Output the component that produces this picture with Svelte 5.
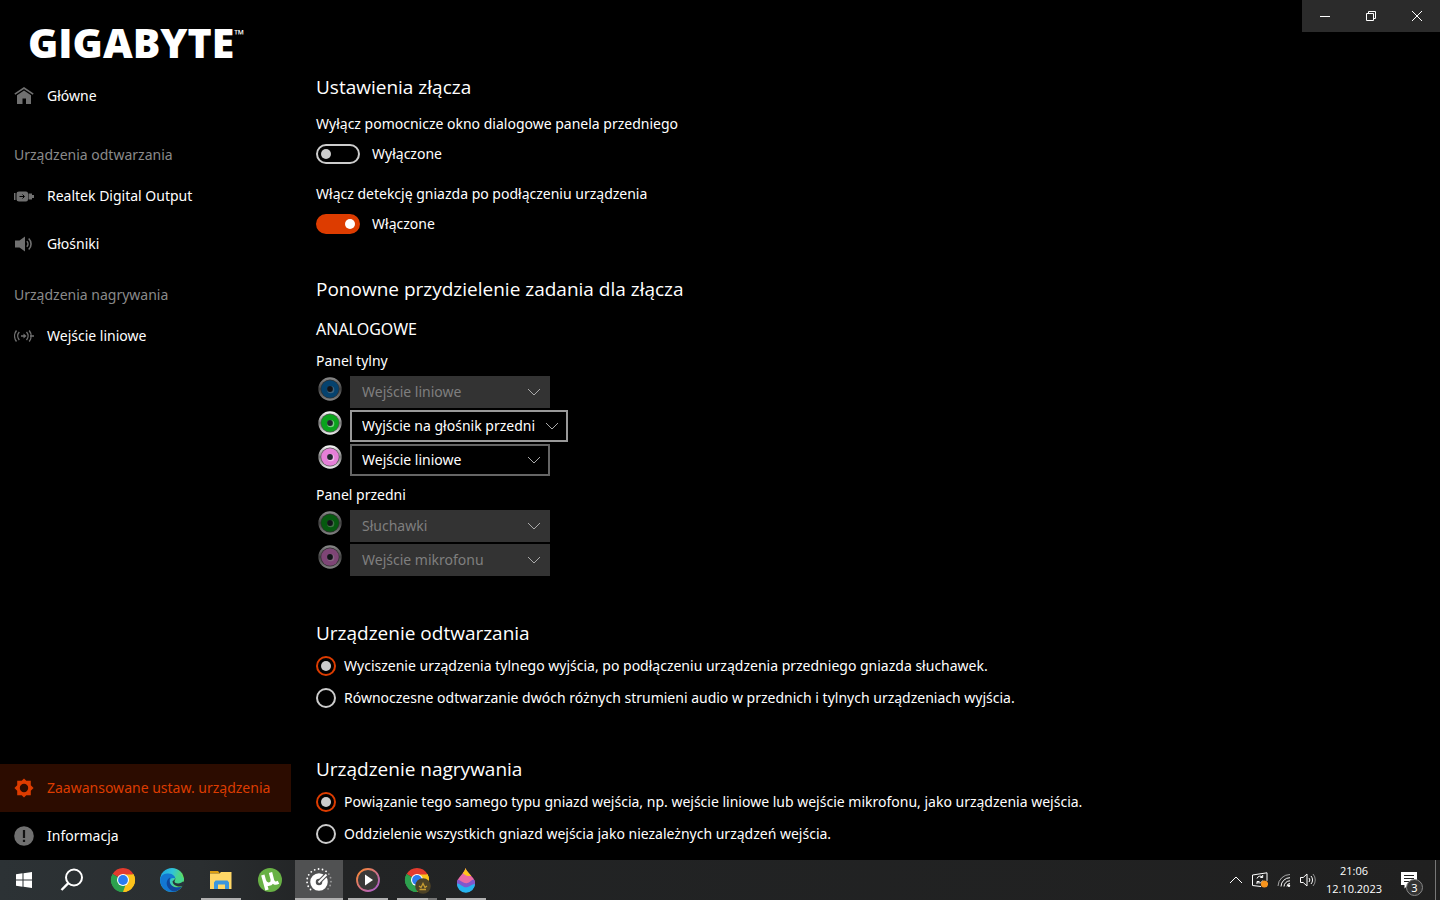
<script lang="ts">
  let dialogOff = $state(false);
  let detection = $state(true);
  let playback = $state("mute");
  let recording = $state("join");

  const playbackDevices = [
    { name: "Realtek Digital Output", icon: "plug" },
    { name: "Głośniki", icon: "speaker" },
  ];
  const recordingDevices = [{ name: "Wejście liniowe", icon: "linein" }];

  const rearPanel = [
    { id: "rear-blue", color: "#0a78c8", value: "Wejście liniowe", disabled: true },
    { id: "rear-green", color: "#0aa31c", value: "Wyjście na głośnik przedni", focused: true },
    { id: "rear-pink", color: "#e67fd8", value: "Wejście liniowe" },
  ];
  const frontPanel = [
    { id: "front-green", color: "#0aa31c", value: "Słuchawki", disabled: true },
    { id: "front-pink", color: "#e67fd8", value: "Wejście mikrofonu", disabled: true },
  ];

  const playbackOptions = [
    { value: "mute", label: "Wyciszenie urządzenia tylnego wyjścia, po podłączeniu urządzenia przedniego gniazda słuchawek." },
    { value: "multi", label: "Równoczesne odtwarzanie dwóch różnych strumieni audio w przednich i tylnych urządzeniach wyjścia." },
  ];
  const recordingOptions = [
    { value: "join", label: "Powiązanie tego samego typu gniazd wejścia, np. wejście liniowe lub wejście mikrofonu, jako urządzenia wejścia." },
    { value: "split", label: "Oddzielenie wszystkich gniazd wejścia jako niezależnych urządzeń wejścia." },
  ];

  const apps = [
    { name: "chrome" },
    { name: "edge" },
    { name: "explorer", open: true },
    { name: "utorrent" },
    { name: "audio", open: true, active: true },
    { name: "player", open: true },
    { name: "profile", open: true, stacked: true },
    { name: "paint", open: true },
  ];

  // dots around the volume dial, dimmer on the right
  const dialDots = Array.from({ length: 15 }, (_, i) => {
    const a = ((135 + i * 19) * Math.PI) / 180;
    return { x: 12 + 12 * Math.cos(a), y: 13 + 12 * Math.sin(a), o: i < 10 ? 1 : 0.45 };
  });
</script>

{#snippet navIcon(name: string)}
  <svg class="nav-icon" viewBox="0 0 20 20" aria-hidden="true">
    {#if name == "home"}
      <path d="M.8 8.200 10 2l9.200 6.200" fill="none" stroke="currentColor" stroke-width="1.600" />
      <path d="M3 9.200 10 4.600l7 4.600V18h-5v-5.500H8.500V18H3z" fill="currentColor" />
    {:else if name == "plug"}
      <path d="M0 7h1.500v7H0zM5 5.500h7q2 0 2 2v6q0 2-2 2H5q-2.500 0-2.500-2v-6q0-2 2.500-2zM14.500 7.500H18v1.500h2v3h-2v1.500h-3.500z" fill="currentColor" />
      <path d="M5.500 10.500h4.500M8.500 8.500l2 2-2 2" fill="none" stroke="#000" stroke-width="1" />
    {:else if name == "speaker"}
      <path d="M1 6.500h4.500L11 2.500v15l-5.500-4H1z" fill="currentColor" />
      <path d="M12.800 7.200a4 4 0 0 1 0 5.600M14.700 4.500a7.600 7.600 0 0 1 0 11" fill="none" stroke="currentColor" stroke-width="1.600" />
    {:else if name == "linein"}
      <path d="M2.500 4.500a9 9 0 0 0 0 11M5.300 6a6 6 0 0 0 0 8M12.500 6a6 6 0 0 1 0 8M15.200 4.500a9 9 0 0 1 0 11M16 10h4" fill="none" stroke="currentColor" stroke-width="1.400" />
      <path d="M7 9.300h2.500V7.500L12.500 10l-3 2.500v-1.800H7z" fill="currentColor" />
    {:else if name == "gear"}
      <path fill-rule="evenodd" d="M10 .4l2.300 2.300h4.500v4.500L19.600 10l-2.800 2.800v4.500h-4.500L10 19.600l-2.300-2.300H3.200v-4.500L.4 10l2.800-2.800V2.700h4.500zM10 5.800a4.200 4.200 0 1 0 0 8.400 4.200 4.200 0 0 0 0-8.400z" fill="currentColor" />
    {:else}
      <circle cx="10" cy="10" r="9.800" fill="currentColor" />
      <path d="M10 4v8M10 13.700v2.300" stroke="#111" stroke-width="2.200" />
    {/if}
  </svg>
{/snippet}

{#snippet navItem(name: string, icon: string, active = false)}
  <a class="nav-item" class:active href="#{icon}">
    {@render navIcon(icon)}
    <span>{name}</span>
  </a>
{/snippet}

{#snippet jacks(title: string, rows: any[])}
  <h4>{title}</h4>
  {#each rows as jack (jack.id)}
    <div class="jack-row">
      <svg class="jack" class:dim={jack.disabled} viewBox="0 0 24 24" aria-hidden="true">
        <circle cx="12" cy="12" r="11.700" fill="url(#rim)" />
        <circle cx="12" cy="12" r="9.400" fill="#555" />
        <circle cx="12" cy="12" r="8.800" fill={jack.color} />
        <circle cx="12.700" cy="12.700" r="3.600" fill="#fff" opacity=".45" />
        <circle cx="12" cy="12" r="2.900" fill="#20242c" />
      </svg>
      <div class="select">
        <select id={jack.id} class:focused={jack.focused} disabled={jack.disabled} aria-label={title}>
          <option>{jack.value}</option>
        </select>
        <svg class="arrow" viewBox="0 0 12 8" aria-hidden="true">
          <path d="M0 1l6 6 6-6" />
        </svg>
      </div>
    </div>
  {/each}
{/snippet}

{#snippet chromeLogo()}
  <path d="M12 12 1.600 6A12 12 0 0 1 22.400 6z" fill="#e33b2e" />
  <path d="M12 12 22.400 6A12 12 0 0 1 12 24z" fill="#fcc21b" />
  <path d="M12 12v12A12 12 0 0 1 1.600 6z" fill="#2da04e" />
  <path d="M12 6.500h10.700A12 12 0 0 1 12 24l4.800-9.300z" fill="#fcc21b" />
  <path d="M1.600 6 7.200 14.700 12 17.500l2.500-.5L12 24A12 12 0 0 1 1.600 6z" fill="#2da04e" />
  <circle cx="12" cy="12" r="6" fill="#fff" />
  <circle cx="12" cy="12" r="4.900" fill="#2b7cf0" />
{/snippet}

{#snippet appIcon(name: string)}
  <svg class="app-icon" viewBox="0 0 24 24" aria-hidden="true">
    {#if name == "chrome"}
      {@render chromeLogo()}
    {:else if name == "edge"}
      <circle cx="12" cy="12" r="12" fill="url(#edge-top)" />
      <path d="M.2 10.500C1.500 6.800 5.200 5.500 8.500 5.600c4.400.1 7 3 6.900 5.700-.6-1.600-4.700-2.200-5.600 1.400-.8 4 2.500 6.700 6.700 6.700 2.200 0 4.200-.6 5.500-1.200C19.800 22 16 24 12 24 4.800 24-.5 18 .2 10.500z" fill="#1377d2" />
      <path d="M10.200 9.500c-3.700 1.800-4.600 6.500-2 10.300 1.700 2.500 4.600 3.900 7 3.700 3-.8 5.500-2.800 6.900-5.300-4.300 2.200-9.300 1.600-11.600-2.200-1.300-2.200-1-5-.3-6.500z" fill="#10479b" />
      <path d="M12.500 13.500c.5-1 2.500-1.500 2.800-3.500l9 4v3.500c-1.500.8-4.800 1.200-7 .7-2.800-.5-4.500-2.300-4.800-4.700z" fill="#28343a" />
      <path d="M15.300 10c.3 2-1 2.500-.8 3.800.3 1.700 4.300 2.200 6.500 1 2-1 3-2.500 3-4l-4-4z" fill="#46d68c" />
    {:else if name == "explorer"}
      <path d="M1 3h8l2 2.500H1z" fill="#dda012" />
      <path d="M1 5.500h9.500L12 4h10.500v17H1z" fill="#ffd766" />
      <path d="M5 14.500l1.500-2h12l1.500 2V21h-4v-4.500H9V21H5z" fill="#3b96dd" />
    {:else if name == "utorrent"}
      <circle cx="12" cy="12" r="12" fill="#68b145" />
      <path d="M4.800 7 9 22M6.300 12.500c1.700 5.500 8.700 4.500 8-1L12.500 4.500M14 10.500c.8 4.500 3 5.500 6.500 3.800" fill="none" stroke="#fff" stroke-width="3.400" />
    {:else if name == "audio"}
      {#each dialDots as dot}
        <circle cx={dot.x} cy={dot.y} r=".9" fill="#fff" opacity={dot.o} />
      {/each}
      <circle cx="12" cy="14" r="6" fill="none" stroke="#fff" stroke-width="5.500" />
      <path d="m12 14 8-8" stroke="#505152" stroke-width="4" />
      <path d="m11.500 14.500 8-8" stroke="#fff" stroke-width="2" />
    {:else if name == "player"}
      <circle cx="12" cy="12" r="11" fill="#3a3938" stroke="url(#player-ring)" stroke-width="1.800" />
      <path d="M9 6.500v11l8-5.500z" fill="#fff" />
    {:else if name == "profile"}
      {@render chromeLogo()}
      <circle cx="18" cy="18" r="7.800" fill="#4d4226" />
      <path d="m14 18 2 1.500 2-4 2 4 2-1.500M14.500 21.500h6.500" fill="none" stroke="#c79c31" stroke-width="1.300" />
    {:else if name == "paint"}
      <path d="M11.500 0c1 5 9.500 9 9.500 15a9 9 0 0 1-18 0C3 9.500 10 6 11.500 0z" fill="#e96aa5" />
      <path d="M11.500 0c1 3 3.500 5.300 5.800 7.800C14.500 8.500 12 8 8.800 5.200 10.200 3.600 11 2 11.500 0z" fill="#ffc51b" />
      <path d="M3.800 11.500c3.500 1 6 4.500 9.500 3.500 3-.8 4-3.500 6.700-3.600.7 1.200 1 2.400 1 3.600a9 9 0 0 1-18 0c0-1.200.3-2.400.8-3.500z" fill="#8057cd" />
      <path d="M3 15.500c3.500 0 6 4.500 10 3.700 3-.6 4.500-3 8-3.200A9 9 0 0 1 3 15.500z" fill="#26b4ee" />
    {/if}
  </svg>
{/snippet}

{#snippet radios(group: string, options: any[], current: string, pick: (v: string) => void)}
  {#each options as option (option.value)}
    <label class="radio">
      <input type="radio" name={group} value={option.value} checked={current == option.value} onchange={() => pick(option.value)} />
      <span>{option.label}</span>
    </label>
  {/each}
{/snippet}

<svg class="defs" aria-hidden="true">
  <defs>
    <linearGradient id="rim" x1="0" y1="0" x2="0" y2="1">
      <stop offset="0" stop-color="#fff" />
      <stop offset=".5" stop-color="#777" />
      <stop offset="1" stop-color="#f0f0f0" />
    </linearGradient>
    <linearGradient id="edge-top" x1="0" y1="0" x2="1" y2=".4">
      <stop offset="0" stop-color="#1ba2e4" />
      <stop offset=".5" stop-color="#30c3d8" />
      <stop offset="1" stop-color="#68e04c" />
    </linearGradient>
    <linearGradient id="player-ring" x1="0" y1="0" x2="1" y2="1">
      <stop offset="0" stop-color="#ff8a2b" />
      <stop offset="1" stop-color="#a55bd6" />
    </linearGradient>
  </defs>
</svg>

<div class="desktop">
  <div class="window">
    <aside>
      <div class="logo">GIGABYTE<sup>™</sup></div>
      <nav>
        {@render navItem("Główne", "home")}
        <div class="group first">Urządzenia odtwarzania</div>
        {#each playbackDevices as device}
          {@render navItem(device.name, device.icon)}
        {/each}
        <div class="group">Urządzenia nagrywania</div>
        {#each recordingDevices as device}
          {@render navItem(device.name, device.icon)}
        {/each}
      </nav>
      <nav class="bottom">
        {@render navItem("Zaawansowane ustaw. urządzenia", "gear", true)}
        {@render navItem("Informacja", "info")}
      </nav>
    </aside>

    <div class="page">
      <header>
        <div class="controls">
          <button aria-label="Minimalizuj">
            <svg viewBox="0 0 10 10"><path d="M0 5.500h10" /></svg>
          </button>
          <button aria-label="Przywróć">
            <svg viewBox="0 0 10 10"><path d="M.5 2.500h7v7h-7zM2.500 2.500v-2h7v7h-2" /></svg>
          </button>
          <button aria-label="Zamknij">
            <svg viewBox="0 0 10 10"><path d="M0 0l10 10M10 0 0 10" /></svg>
          </button>
        </div>
      </header>

      <main>
        <section>
          <h2>Ustawienia złącza</h2>
          <div class="setting">
            <label for="dialog">Wyłącz pomocnicze okno dialogowe panela przedniego</label>
            <div class="toggle">
              <input id="dialog" type="checkbox" role="switch" bind:checked={dialogOff} />
              <span>{dialogOff ? "Włączone" : "Wyłączone"}</span>
            </div>
          </div>
          <div class="setting">
            <label for="detection">Włącz detekcję gniazda po podłączeniu urządzenia</label>
            <div class="toggle">
              <input id="detection" type="checkbox" role="switch" bind:checked={detection} />
              <span>{detection ? "Włączone" : "Wyłączone"}</span>
            </div>
          </div>
        </section>

        <section>
          <h2>Ponowne przydzielenie zadania dla złącza</h2>
          <h3>ANALOGOWE</h3>
          {@render jacks("Panel tylny", rearPanel)}
          {@render jacks("Panel przedni", frontPanel)}
        </section>

        <section>
          <h2>Urządzenie odtwarzania</h2>
          {@render radios("playback", playbackOptions, playback, (v) => (playback = v))}
        </section>

        <section>
          <h2>Urządzenie nagrywania</h2>
          {@render radios("recording", recordingOptions, recording, (v) => (recording = v))}
        </section>
      </main>
    </div>
  </div>

  <footer>
    <button class="task" aria-label="Start">
      <svg class="app-icon" viewBox="0 0 24 24">
        <path d="M4 6.300 10.500 5.300v6.200H4zM11.500 5.200 20 4v7.500h-8.500zM4 12.500h6.500v6.200L4 17.700zM11.500 12.500H20V20l-8.500-1.200z" fill="#fff" />
      </svg>
    </button>
    <button class="task" aria-label="Szukaj">
      <svg class="app-icon" viewBox="0 0 24 24">
        <circle cx="14" cy="9.500" r="8" fill="none" stroke="#fff" stroke-width="2" />
        <path d="M8.300 15.200 1.500 22" stroke="#fff" stroke-width="2.400" />
      </svg>
    </button>
    <div class="apps">
      {#each apps as app (app.name)}
        <button class="task" class:open={app.open} class:active={app.active} class:stacked={app.stacked} aria-label={app.name}>
          {@render appIcon(app.name)}
        </button>
      {/each}
    </div>

    <div class="tray">
      <svg class="tray-icon" viewBox="0 0 16 16"><path d="m2 11 6-6 6 6" /></svg>
      <svg class="tray-icon" viewBox="0 0 16 16">
        <path d="M.5 3 15 .8v8M9 14.500l-8.500-1V3M5 6.500a3.400 3.400 0 0 1 5.500-1.500M10.700 3v2.500H8.300M10.700 8.500a3.400 3.400 0 0 1-5.400 1.700M5 12V9.500h2.500" />
        <circle cx="12.500" cy="12" r="3.600" class="badge" />
      </svg>
      <svg class="tray-icon" viewBox="0 0 16 16">
        <path d="M2 14A12 12 0 0 1 14 2.500" opacity=".6" />
        <path d="M5 14.500A9 9 0 0 1 14 5.700M8 14.500A6 6 0 0 1 14 8.800M11 14.500a3 3 0 0 1 3-3" />
        <circle cx="13" cy="13.800" r="1.200" fill="#fff" stroke="none" />
      </svg>
      <svg class="tray-icon" viewBox="0 0 16 16">
        <path d="M.5 5.500h2.700L7 2v12l-3.800-3.500H.5zM9 6a3 3 0 0 1 0 4M11 4a6 6 0 0 1 0 8" />
        <path d="M13 2a9 9 0 0 1 0 12" opacity=".5" />
      </svg>
      <div class="clock">
        <time>21:06</time>
        <time>12.10.2023</time>
      </div>
      <button class="notes" aria-label="Powiadomienia">
        <svg viewBox="0 0 18 18">
          <path d="M1 1h16v13H8l-3.500 3.500V14H1z" fill="#fff" />
          <path d="M4 4.500h10M4 7.500h10M4 10.500h7" stroke="#222" />
        </svg>
        <span>3</span>
      </button>
    </div>
  </footer>
</div>

<style>
  :global(body) {
    margin: 0;
    background: #000;
  }

  .defs {
    position: absolute;
    width: 0;
    height: 0;
  }

  .desktop {
    min-height: 100vh;
    display: flex;
    flex-direction: column;
    background: #000;
    color: #fff;
    font-family: "Noto Sans", "Open Sans", sans-serif;
    font-size: 14px;
    line-height: 20px;
  }

  button, select {
    font: inherit;
    color: inherit;
    border: 0;
    background: none;
  }

  h2, h3, h4 {
    margin: 0;
    font-weight: 400;
  }

  .window {
    flex: 1;
    display: flex;
  }

  aside {
    width: 291px;
    flex: none;
    display: flex;
    flex-direction: column;
  }

  .logo {
    height: 72px;
    padding-left: 28px;
    box-sizing: border-box;
    font-family: "Open Sans", sans-serif;
    font-size: 41px;
    font-weight: 800;
    line-height: 84px;
    white-space: nowrap;

    sup {
      font-size: 13px;
      font-weight: 600;
      line-height: 12px;
      vertical-align: 19px;
    }
  }

  .nav-item {
    display: flex;
    align-items: center;
    gap: 13px;
    height: 48px;
    padding-left: 14px;
    color: #fff;
    text-decoration: none;

    &.active {
      color: #dd3c00;
      background: #2c0c00;
    }

    &:not(.active) .nav-icon {
      color: #707070;
    }
  }

  .nav-icon {
    width: 20px;
    height: 20px;
  }

  .group {
    padding: 17px 14px 7px;
    color: #8a8a8a;

    &.first {
      margin-top: 8px;
    }
  }

  .bottom {
    margin-top: auto;
  }

  .page {
    flex: 1;
  }

  header {
    display: flex;
    justify-content: flex-end;
  }

  .controls {
    display: flex;
    background: #2b2b2b;

    button {
      width: 46px;
      height: 32px;
      display: grid;
      place-items: center;
      padding: 0;
    }

    svg {
      width: 10px;
      height: 10px;
      fill: none;
      stroke: #fff;
    }
  }

  main {
    padding: 0 25px 10px;
  }

  section {
    padding-top: 41px;
  }

  h2 {
    font-family: "Open Sans", sans-serif;
    font-size: 19px;
    line-height: 28px;
    margin-bottom: 3px;
  }

  h3 {
    font-size: 16px;
    padding-top: 13px;
    margin-bottom: 12px;
  }

  .setting {
    padding-top: 10px;

    & + .setting {
      padding-top: 20px;
    }

    label {
      display: block;
      margin-bottom: 10px;
    }
  }

  .toggle {
    display: flex;
    align-items: center;
    gap: 12px;

    input {
      appearance: none;
      margin: 0;
      width: 44px;
      height: 20px;
      padding: 3px;
      box-sizing: border-box;
      border: 2px solid #ccc;
      border-radius: 10px;
      display: flex;

      &::before {
        content: "";
        width: 10px;
        height: 10px;
        border-radius: 50%;
        background: #ccc;
      }

      &:checked {
        background: #dd3c00;
        border-color: #dd3c00;
        justify-content: flex-end;
      }

      &:checked::before {
        background: #fff;
      }
    }
  }

  h4 {
    font-size: 14px;
    margin-bottom: 5px;
  }

  .jack-row + h4 {
    padding-top: 7px;
  }

  .jack-row {
    display: flex;
    gap: 8px;
    padding: 0 0 2px 2px;
  }

  .jack {
    width: 24px;
    height: 24px;
    margin-top: 1px;

    &.dim {
      opacity: .55;
    }
  }

  .select {
    position: relative;

    select {
      appearance: none;
      display: block;
      min-width: 200px;
      height: 32px;
      padding: 0 30px 0 10px;
      border: 2px solid #666;
      border-radius: 0;
      background: #000;
      opacity: 1;

      &.focused {
        border-color: #999;
      }

      &:disabled {
        color: #7f7f7f;
        background: #333;
        border-color: #333;
      }
    }

    .arrow {
      position: absolute;
      right: 10px;
      top: 12px;
      width: 12px;
      height: 8px;
      fill: none;
      stroke: #aaa;
      pointer-events: none;
    }
  }

  .radio {
    display: flex;
    align-items: center;
    gap: 8px;
    min-height: 32px;

    input {
      appearance: none;
      flex: none;
      margin: 0;
      width: 20px;
      height: 20px;
      box-sizing: border-box;
      border: 2px solid #ccc;
      border-radius: 50%;
      display: grid;
      place-items: center;

      &:checked {
        border-color: #dd3c00;
      }

      &:checked::before {
        content: "";
        width: 10px;
        height: 10px;
        border-radius: 50%;
        background: #ccc;
      }
    }
  }

  footer {
    height: 40px;
    display: flex;
    background: linear-gradient(90deg, #2c3235, #2a2e30 14%, #222425 22%, #202020);
  }

  .task {
    position: relative;
    width: 48px;
    height: 40px;
    padding: 0;
    display: grid;
    place-items: center;

    &.open::after {
      content: "";
      position: absolute;
      left: 4px;
      right: 4px;
      bottom: 0;
      height: 2px;
      background: #b0b0b0;
    }

    &.active {
      background: #505152;
    }

    &.active::after {
      left: 0;
      right: 0;
    }

    &.stacked::after {
      background: linear-gradient(90deg, #b0b0b0 31px, #777 31px);
    }
  }

  .app-icon {
    width: 24px;
    height: 24px;
    overflow: visible;
  }

  .apps {
    display: flex;
    gap: 1px;
    margin-left: 3px;
  }

  .tray {
    margin-left: auto;
    display: flex;
    align-items: center;
    gap: 8px;
    padding-right: 4px;
  }

  .tray-icon {
    width: 16px;
    height: 16px;
    fill: none;
    stroke: #fff;

    .badge {
      fill: #f7941d;
      stroke: none;
    }
  }

  .clock {
    display: flex;
    flex-direction: column;
    align-items: center;
    font-family: "Open Sans", sans-serif;
    font-size: 11px;
    line-height: 18px;
    padding: 0 2px;
  }

  .notes {
    position: relative;
    width: 44px;
    height: 40px;
    padding: 0 10px 0 0;
    display: grid;
    place-items: center;
    border-right: 1px solid #777;

    svg {
      width: 18px;
      height: 18px;
    }

    span {
      position: absolute;
      right: 12px;
      bottom: 4px;
      width: 15px;
      height: 15px;
      border: 1px solid #888;
      border-radius: 50%;
      background: #333;
      font-size: 11px;
      line-height: 15px;
    }
  }
</style>
